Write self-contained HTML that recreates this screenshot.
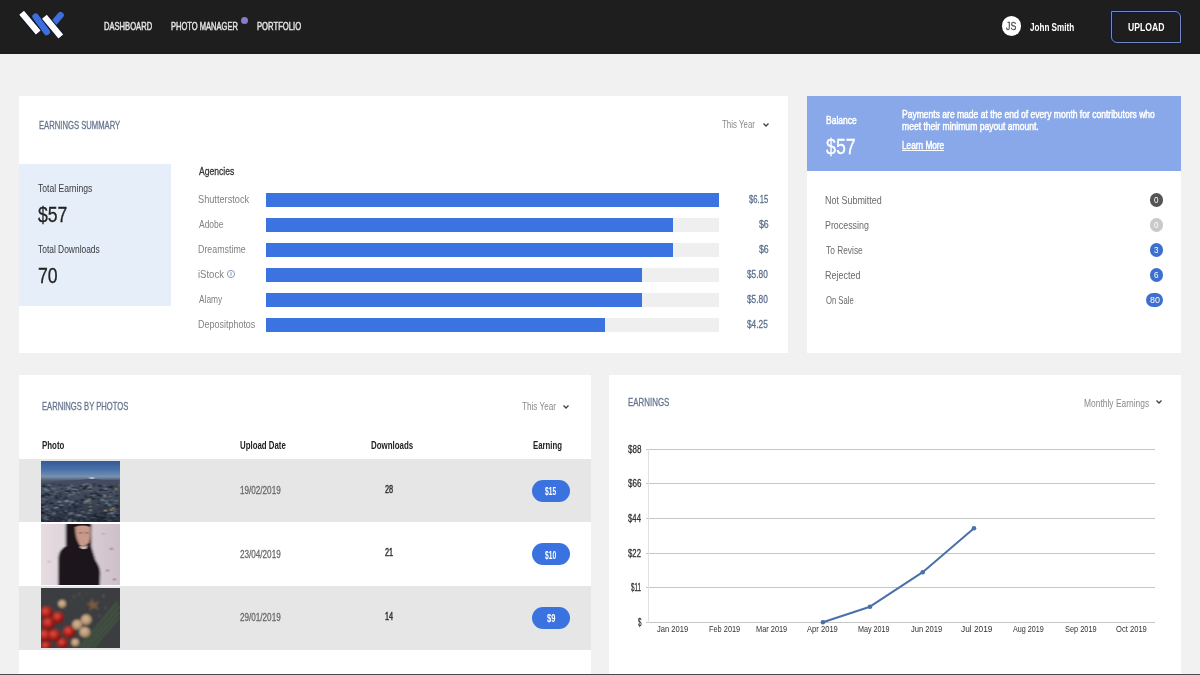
<!DOCTYPE html>
<html><head><meta charset="utf-8">
<style>
html,body{margin:0;padding:0}
body{width:1200px;height:675px;overflow:hidden;background:#f1f1f1;position:relative;font-family:"Liberation Sans",sans-serif}
.abs{position:absolute}
.tx{position:absolute;white-space:nowrap;line-height:1;transform-origin:0 0;font-family:"Liberation Sans",sans-serif}
.card{position:absolute;background:#fff}
.track{position:absolute;left:265.5px;width:453.5px;height:14.5px;background:#efefef}
.fill{position:absolute;left:0;top:0;height:100%;background:#3b73e0}
.badge{position:absolute;height:14px;border-radius:7px}
.pill{position:absolute;width:38px;height:22px;border-radius:11px;background:#3a72df}
.row{position:absolute;left:19px;width:571.5px;background:#e6e6e6}
.gl{position:absolute;left:645.7px;width:509.6px;height:1px;background:#c6c6c6}
</style></head>
<body>
<!-- header -->
<div class="abs" style="left:0;top:0;width:1200px;height:53.6px;background:#1e1e1e"></div>
<svg class="abs" style="left:0;top:0" width="80" height="53" viewBox="0 0 80 53">
  <g stroke-linecap="round" fill="none">
    <line x1="35.6" y1="16.6" x2="46.8" y2="32" stroke="#3b6fe0" stroke-width="6.4"/>
    <line x1="54.4" y1="22.4" x2="60.6" y2="15.2" stroke="#3b6fe0" stroke-width="6.4"/>
  </g>
  <g stroke-linecap="butt" fill="none">
    <line x1="21.6" y1="12.8" x2="38.2" y2="32.6" stroke="#0d1430" stroke-width="8"/>
    <line x1="21.6" y1="12.8" x2="38.2" y2="32.6" stroke="#ffffff" stroke-width="6.2"/>
    <line x1="44.4" y1="16.8" x2="60.8" y2="36.4" stroke="#0d1430" stroke-width="8"/>
    <line x1="44.4" y1="16.8" x2="60.8" y2="36.4" stroke="#ffffff" stroke-width="6.2"/>
  </g>
</svg>
<div class="abs" style="left:240.8px;top:17px;width:7px;height:7px;border-radius:50%;background:#8a7bc6"></div>
<div class="abs" style="left:1001.5px;top:16px;width:19.5px;height:20px;border-radius:50%;background:#ffffff"></div>
<div class="abs" style="left:1111px;top:11.2px;width:67.8px;height:29.5px;border:1.2px solid #7088c8;border-radius:0 6px 0 6px;box-shadow:0 0 0 1px #101a3e, inset 0 0 0 1px #101a3e"></div>

<!-- card 1 -->
<div class="card" style="left:19px;top:96px;width:769px;height:257px"></div>
<svg class="abs" style="left:761px;top:121px" width="10" height="8" viewBox="0 0 10 8"><path d="M2.5 2.6 L5 5 L7.5 2.6" stroke="#444" stroke-width="1.4" fill="none"/></svg>
<div class="abs" style="left:19px;top:164px;width:152px;height:141.5px;background:#e6eef9"></div>
<div class="track" style="top:192.5px"><div class="fill" style="width:453.5px"></div></div>
<div class="track" style="top:217.5px"><div class="fill" style="width:407.8px"></div></div>
<div class="track" style="top:242.5px"><div class="fill" style="width:407.8px"></div></div>
<div class="track" style="top:267.5px"><div class="fill" style="width:376.7px"></div></div>
<div class="track" style="top:292.5px"><div class="fill" style="width:376.7px"></div></div>
<div class="track" style="top:317.5px"><div class="fill" style="width:339.4px"></div></div>
<svg class="abs" style="left:225.5px;top:269px" width="10" height="10" viewBox="0 0 10 10"><circle cx="5" cy="5" r="3.6" stroke="#7a8fb0" stroke-width="0.9" fill="none"/><line x1="5" y1="3.2" x2="5" y2="6.8" stroke="#7a8fb0" stroke-width="0.9"/></svg>

<!-- card 2 -->
<div class="card" style="left:807px;top:96px;width:374px;height:257px"></div>
<div class="abs" style="left:807px;top:96px;width:374px;height:74.5px;background:#88a8ea"></div>
<div class="abs" style="left:901.7px;top:150px;width:42px;height:1px;background:#ffffff"></div>
<div class="badge" style="left:1150px;top:193px;width:13px;background:#555555"></div>
<div class="badge" style="left:1150px;top:218px;width:13px;background:#c9c9c9"></div>
<div class="badge" style="left:1150px;top:243px;width:13px;background:#3d6fcf"></div>
<div class="badge" style="left:1150px;top:268px;width:13px;background:#3d6fcf"></div>
<div class="badge" style="left:1145.5px;top:293px;width:17.5px;background:#3d6fcf"></div>

<!-- card 3 -->
<div class="card" style="left:19px;top:374.7px;width:571.5px;height:300px"></div>
<svg class="abs" style="left:561px;top:403px" width="10" height="8" viewBox="0 0 10 8"><path d="M2.5 2.6 L5 5 L7.5 2.6" stroke="#444" stroke-width="1.4" fill="none"/></svg>
<div class="row" style="top:459.2px;height:63.3px"></div>
<div class="row" style="top:586.3px;height:63.5px"></div>
<div class="pill" style="left:531.8px;top:479.6px"></div>
<div class="pill" style="left:532px;top:543.2px"></div>
<div class="pill" style="left:532px;top:606.5px"></div>
<!--IMAGES-->
<svg class="abs" style="left:41.4px;top:461px" width="78.5" height="60.6" viewBox="0 0 78 61" preserveAspectRatio="none">
<defs><linearGradient id="sky" x1="0" y1="0" x2="0" y2="1"><stop offset="0" stop-color="#2b5390"/><stop offset="0.18" stop-color="#4b72aa"/><stop offset="0.28" stop-color="#7891b0"/><stop offset="0.34" stop-color="#505a6c"/><stop offset="1" stop-color="#262d3c"/></linearGradient></defs>
<filter id="bl1" x="-10%" y="-10%" width="120%" height="120%"><feGaussianBlur stdDeviation="0.8"/></filter><rect width="78" height="61" fill="url(#sky)"/><g filter="url(#bl1)"><rect x="-3" y="-3" width="84" height="67" fill="url(#sky)"/>
<path d="M0 22 L20 20 L40 19 L50 17.5 L60 19 L78 19 L78 26 L0 26Z" fill="#424c60"/>
<ellipse cx="50.5" cy="17.2" rx="2.6" ry="0.8" fill="#d8dde4"/>
<circle cx="25.3" cy="28.7" r="1.1" fill="#1a202c"/><circle cx="41.8" cy="36.9" r="0.6" fill="#3f4a5c"/><circle cx="2.9" cy="39.5" r="0.6" fill="#1a202c"/><circle cx="33.1" cy="54.4" r="0.6" fill="#1a202c"/><circle cx="48.9" cy="59.0" r="1.0" fill="#1a202c"/><circle cx="76.1" cy="24.8" r="1.3" fill="#1a202c"/><circle cx="11.3" cy="27.5" r="0.8" fill="#6c7888"/><circle cx="14.1" cy="45.1" r="1.1" fill="#1a202c"/><circle cx="42.7" cy="25.4" r="0.6" fill="#1a202c"/><circle cx="53.1" cy="39.2" r="0.8" fill="#3f4a5c"/><circle cx="35.3" cy="34.4" r="1.2" fill="#3f4a5c"/><circle cx="19.0" cy="44.8" r="1.0" fill="#6c7888"/><circle cx="56.9" cy="33.9" r="1.4" fill="#1a202c"/><circle cx="32.6" cy="51.8" r="0.6" fill="#3f4a5c"/><circle cx="3.1" cy="48.4" r="1.2" fill="#3f4a5c"/><circle cx="68.3" cy="34.9" r="1.1" fill="#3f4a5c"/><circle cx="45.2" cy="40.3" r="1.3" fill="#948c74"/><circle cx="37.0" cy="48.2" r="0.6" fill="#3f4a5c"/><circle cx="50.5" cy="60.7" r="1.2" fill="#1a202c"/><circle cx="30.1" cy="48.4" r="0.5" fill="#3f4a5c"/><circle cx="13.1" cy="27.4" r="0.6" fill="#6c7888"/><circle cx="10.1" cy="32.4" r="0.9" fill="#6c7888"/><circle cx="6.3" cy="40.1" r="1.0" fill="#6c7888"/><circle cx="63.9" cy="55.8" r="0.8" fill="#1a202c"/><circle cx="28.0" cy="56.6" r="1.4" fill="#1a202c"/><circle cx="13.7" cy="31.8" r="0.7" fill="#3f4a5c"/><circle cx="46.0" cy="33.0" r="0.5" fill="#1a202c"/><circle cx="28.8" cy="44.5" r="1.4" fill="#3f4a5c"/><circle cx="40.2" cy="46.5" r="1.1" fill="#1a202c"/><circle cx="70.2" cy="52.6" r="1.3" fill="#6c7888"/><circle cx="30.6" cy="38.2" r="0.6" fill="#3f4a5c"/><circle cx="4.9" cy="25.6" r="0.7" fill="#1a202c"/><circle cx="26.5" cy="25.0" r="0.5" fill="#1a202c"/><circle cx="7.9" cy="36.8" r="0.5" fill="#6c7888"/><circle cx="47.9" cy="28.6" r="0.7" fill="#1a202c"/><circle cx="28.4" cy="27.7" r="1.3" fill="#75808f"/><circle cx="36.3" cy="41.4" r="0.6" fill="#1a202c"/><circle cx="26.7" cy="33.1" r="1.2" fill="#1a202c"/><circle cx="1.8" cy="59.1" r="1.0" fill="#1a202c"/><circle cx="42.4" cy="24.0" r="1.0" fill="#948c74"/><circle cx="67.3" cy="49.5" r="0.7" fill="#1a202c"/><circle cx="13.0" cy="52.3" r="1.0" fill="#6c7888"/><circle cx="25.7" cy="31.5" r="1.2" fill="#75808f"/><circle cx="66.5" cy="53.6" r="1.2" fill="#3f4a5c"/><circle cx="17.7" cy="42.7" r="0.8" fill="#1a202c"/><circle cx="2.2" cy="33.6" r="0.7" fill="#3f4a5c"/><circle cx="74.6" cy="40.0" r="1.3" fill="#948c74"/><circle cx="74.5" cy="36.9" r="0.7" fill="#1a202c"/><circle cx="15.3" cy="30.8" r="1.1" fill="#75808f"/><circle cx="65.6" cy="41.2" r="1.1" fill="#6c7888"/><circle cx="6.6" cy="48.1" r="1.3" fill="#6c7888"/><circle cx="58.5" cy="41.2" r="0.7" fill="#6c7888"/><circle cx="25.9" cy="53.4" r="1.4" fill="#1a202c"/><circle cx="31.3" cy="59.0" r="1.2" fill="#1a202c"/><circle cx="9.9" cy="28.7" r="1.3" fill="#6c7888"/><circle cx="11.4" cy="54.4" r="1.4" fill="#3f4a5c"/><circle cx="27.3" cy="43.8" r="0.6" fill="#1a202c"/><circle cx="75.7" cy="47.7" r="1.0" fill="#948c74"/><circle cx="33.8" cy="56.1" r="1.2" fill="#1a202c"/><circle cx="19.6" cy="34.1" r="0.7" fill="#3f4a5c"/><circle cx="20.2" cy="38.9" r="0.6" fill="#75808f"/><circle cx="27.6" cy="40.4" r="1.0" fill="#75808f"/><circle cx="32.8" cy="57.9" r="1.0" fill="#3f4a5c"/><circle cx="40.8" cy="23.7" r="0.9" fill="#1a202c"/><circle cx="0.3" cy="53.4" r="0.7" fill="#3f4a5c"/><circle cx="56.6" cy="44.1" r="0.8" fill="#3f4a5c"/><circle cx="43.3" cy="52.8" r="0.6" fill="#3f4a5c"/><circle cx="19.4" cy="33.5" r="1.2" fill="#3f4a5c"/><circle cx="43.8" cy="51.9" r="1.3" fill="#3f4a5c"/><circle cx="47.8" cy="42.2" r="1.0" fill="#3f4a5c"/><circle cx="35.3" cy="43.3" r="0.9" fill="#75808f"/><circle cx="54.5" cy="56.3" r="1.3" fill="#1a202c"/><circle cx="43.6" cy="58.8" r="1.3" fill="#1a202c"/><circle cx="9.5" cy="39.8" r="0.6" fill="#1a202c"/><circle cx="5.7" cy="48.4" r="1.2" fill="#6c7888"/><circle cx="12.0" cy="50.2" r="1.1" fill="#1a202c"/><circle cx="68.9" cy="59.8" r="0.7" fill="#948c74"/><circle cx="31.1" cy="41.5" r="1.4" fill="#6c7888"/><circle cx="12.6" cy="39.4" r="1.0" fill="#1a202c"/><circle cx="15.3" cy="35.1" r="1.1" fill="#1a202c"/><circle cx="43.2" cy="39.7" r="0.5" fill="#1a202c"/><circle cx="48.7" cy="42.5" r="0.6" fill="#948c74"/><circle cx="61.5" cy="59.9" r="0.6" fill="#1a202c"/><circle cx="3.1" cy="52.6" r="0.7" fill="#1a202c"/><circle cx="32.9" cy="57.6" r="1.2" fill="#1a202c"/><circle cx="11.7" cy="57.9" r="1.0" fill="#3f4a5c"/><circle cx="7.0" cy="25.2" r="1.1" fill="#3f4a5c"/><circle cx="5.6" cy="58.7" r="1.1" fill="#6c7888"/><circle cx="6.5" cy="55.5" r="0.6" fill="#6c7888"/><circle cx="35.4" cy="35.9" r="1.0" fill="#75808f"/><circle cx="20.9" cy="27.9" r="1.0" fill="#1a202c"/><circle cx="8.5" cy="29.1" r="0.5" fill="#1a202c"/><circle cx="24.3" cy="34.6" r="1.2" fill="#1a202c"/><circle cx="39.0" cy="29.8" r="0.8" fill="#1a202c"/><circle cx="19.5" cy="23.6" r="1.2" fill="#3f4a5c"/><circle cx="14.8" cy="41.0" r="1.3" fill="#1a202c"/><circle cx="63.9" cy="39.4" r="0.9" fill="#6c7888"/><circle cx="30.7" cy="42.3" r="1.1" fill="#75808f"/><circle cx="26.7" cy="54.6" r="1.1" fill="#3f4a5c"/><circle cx="31.6" cy="36.2" r="0.5" fill="#1a202c"/><circle cx="5.5" cy="51.2" r="0.7" fill="#1a202c"/><circle cx="6.6" cy="55.0" r="1.3" fill="#3f4a5c"/><circle cx="22.0" cy="32.2" r="0.8" fill="#3f4a5c"/><circle cx="12.3" cy="39.9" r="0.7" fill="#75808f"/><circle cx="75.9" cy="43.8" r="0.7" fill="#948c74"/><circle cx="24.1" cy="36.6" r="0.5" fill="#1a202c"/><circle cx="37.0" cy="42.1" r="0.7" fill="#3f4a5c"/><circle cx="0.4" cy="33.0" r="0.6" fill="#1a202c"/><circle cx="3.3" cy="23.9" r="0.8" fill="#1a202c"/><circle cx="45.7" cy="43.1" r="1.2" fill="#3f4a5c"/><circle cx="55.8" cy="56.4" r="0.9" fill="#1a202c"/><circle cx="76.8" cy="28.7" r="1.2" fill="#3f4a5c"/><circle cx="3.4" cy="54.7" r="1.3" fill="#3f4a5c"/><circle cx="57.2" cy="53.9" r="0.6" fill="#3f4a5c"/><circle cx="39.3" cy="54.7" r="1.2" fill="#6c7888"/><circle cx="45.6" cy="56.9" r="1.1" fill="#3f4a5c"/><circle cx="17.9" cy="24.2" r="0.6" fill="#1a202c"/><circle cx="8.2" cy="54.8" r="1.0" fill="#3f4a5c"/><circle cx="48.8" cy="48.9" r="0.9" fill="#1a202c"/><circle cx="62.2" cy="51.4" r="1.0" fill="#3f4a5c"/><circle cx="51.4" cy="25.5" r="1.2" fill="#1a202c"/><circle cx="5.8" cy="33.1" r="1.2" fill="#1a202c"/><circle cx="57.7" cy="60.1" r="0.9" fill="#1a202c"/><circle cx="37.4" cy="49.0" r="1.2" fill="#3f4a5c"/><circle cx="50.1" cy="25.9" r="0.6" fill="#1a202c"/><circle cx="58.0" cy="34.6" r="1.0" fill="#1a202c"/><circle cx="4.7" cy="33.2" r="1.1" fill="#3f4a5c"/><circle cx="52.7" cy="34.1" r="1.0" fill="#3f4a5c"/><circle cx="36.4" cy="27.5" r="1.3" fill="#1a202c"/><circle cx="76.3" cy="58.6" r="0.5" fill="#3f4a5c"/><circle cx="64.0" cy="59.8" r="0.9" fill="#1a202c"/><circle cx="16.4" cy="58.9" r="0.7" fill="#3f4a5c"/><circle cx="11.1" cy="42.9" r="1.4" fill="#1a202c"/><circle cx="64.0" cy="42.3" r="1.3" fill="#3f4a5c"/><circle cx="18.0" cy="57.1" r="0.9" fill="#1a202c"/><circle cx="0.3" cy="41.7" r="0.9" fill="#1a202c"/><circle cx="11.0" cy="36.1" r="0.8" fill="#6c7888"/><circle cx="0.1" cy="51.5" r="1.3" fill="#1a202c"/><circle cx="72.3" cy="50.1" r="1.3" fill="#1a202c"/><circle cx="29.0" cy="37.9" r="1.4" fill="#3f4a5c"/><circle cx="28.1" cy="39.3" r="0.7" fill="#1a202c"/><circle cx="7.9" cy="54.7" r="0.8" fill="#75808f"/><circle cx="19.4" cy="33.1" r="1.0" fill="#1a202c"/><circle cx="29.1" cy="59.3" r="1.3" fill="#6c7888"/><circle cx="49.2" cy="57.7" r="1.3" fill="#3f4a5c"/><circle cx="56.1" cy="24.9" r="1.2" fill="#3f4a5c"/><circle cx="58.7" cy="47.5" r="0.8" fill="#1a202c"/><circle cx="72.3" cy="27.8" r="0.9" fill="#1a202c"/><circle cx="23.2" cy="51.1" r="1.4" fill="#1a202c"/><circle cx="51.2" cy="34.4" r="1.0" fill="#1a202c"/><circle cx="13.1" cy="29.1" r="0.7" fill="#75808f"/><circle cx="38.8" cy="31.4" r="1.3" fill="#75808f"/><circle cx="35.1" cy="28.3" r="0.7" fill="#1a202c"/><circle cx="26.7" cy="26.5" r="0.7" fill="#1a202c"/><circle cx="44.4" cy="56.7" r="1.2" fill="#1a202c"/><circle cx="32.3" cy="42.9" r="0.8" fill="#1a202c"/><circle cx="4.8" cy="33.5" r="1.4" fill="#1a202c"/><circle cx="39.3" cy="46.9" r="1.3" fill="#1a202c"/><circle cx="21.1" cy="32.4" r="0.9" fill="#3f4a5c"/><circle cx="74.4" cy="55.2" r="1.3" fill="#1a202c"/><circle cx="2.5" cy="50.0" r="1.3" fill="#3f4a5c"/><circle cx="45.8" cy="23.0" r="0.9" fill="#948c74"/><circle cx="64.4" cy="55.5" r="1.4" fill="#1a202c"/><circle cx="8.5" cy="28.9" r="1.0" fill="#3f4a5c"/><circle cx="73.4" cy="50.4" r="1.1" fill="#6c7888"/><circle cx="35.7" cy="44.0" r="0.5" fill="#6c7888"/><circle cx="18.1" cy="58.0" r="1.1" fill="#1a202c"/><circle cx="10.0" cy="32.6" r="1.1" fill="#3f4a5c"/><circle cx="8.7" cy="25.7" r="1.0" fill="#3f4a5c"/><circle cx="30.3" cy="31.5" r="1.0" fill="#1a202c"/><circle cx="23.5" cy="40.5" r="1.4" fill="#3f4a5c"/><circle cx="68.9" cy="41.1" r="0.7" fill="#1a202c"/><circle cx="74.9" cy="49.8" r="0.8" fill="#1a202c"/><circle cx="38.9" cy="48.6" r="0.9" fill="#1a202c"/><circle cx="52.1" cy="58.2" r="0.7" fill="#1a202c"/><circle cx="26.4" cy="39.0" r="1.1" fill="#1a202c"/><circle cx="62.2" cy="51.1" r="1.0" fill="#1a202c"/><circle cx="75.6" cy="34.8" r="1.2" fill="#1a202c"/><circle cx="17.3" cy="51.9" r="0.8" fill="#75808f"/><circle cx="38.7" cy="30.1" r="0.7" fill="#1a202c"/><circle cx="51.9" cy="59.1" r="0.6" fill="#1a202c"/><circle cx="16.6" cy="60.0" r="0.6" fill="#1a202c"/><circle cx="4.7" cy="37.9" r="1.3" fill="#6c7888"/><circle cx="57.2" cy="60.9" r="1.3" fill="#1a202c"/><circle cx="14.5" cy="58.6" r="1.2" fill="#1a202c"/><circle cx="51.8" cy="37.4" r="0.8" fill="#1a202c"/><circle cx="13.2" cy="23.1" r="0.8" fill="#1a202c"/><circle cx="74.5" cy="27.7" r="1.4" fill="#1a202c"/><circle cx="27.8" cy="54.2" r="1.2" fill="#3f4a5c"/><circle cx="3.8" cy="41.0" r="0.8" fill="#75808f"/><circle cx="15.1" cy="36.8" r="1.3" fill="#1a202c"/><circle cx="32.0" cy="53.8" r="1.2" fill="#1a202c"/><circle cx="2.7" cy="25.4" r="1.3" fill="#1a202c"/><circle cx="58.3" cy="57.1" r="0.8" fill="#1a202c"/><circle cx="74.7" cy="46.4" r="0.7" fill="#3f4a5c"/><circle cx="24.7" cy="33.5" r="0.5" fill="#6c7888"/><circle cx="71.5" cy="47.1" r="1.3" fill="#1a202c"/><circle cx="18.2" cy="41.1" r="1.4" fill="#75808f"/><circle cx="30.1" cy="32.5" r="0.9" fill="#3f4a5c"/><circle cx="72.4" cy="30.0" r="1.2" fill="#3f4a5c"/><circle cx="64.2" cy="52.4" r="1.0" fill="#1a202c"/><circle cx="24.9" cy="36.8" r="1.2" fill="#1a202c"/><circle cx="15.4" cy="51.6" r="0.7" fill="#1a202c"/><circle cx="2.6" cy="44.0" r="0.8" fill="#75808f"/><circle cx="68.9" cy="60.5" r="0.7" fill="#1a202c"/><circle cx="7.5" cy="41.9" r="1.1" fill="#3f4a5c"/><circle cx="18.3" cy="38.8" r="1.1" fill="#3f4a5c"/><circle cx="58.3" cy="55.2" r="1.1" fill="#1a202c"/><circle cx="65.6" cy="34.2" r="1.0" fill="#1a202c"/><circle cx="57.6" cy="30.6" r="0.7" fill="#1a202c"/><circle cx="12.0" cy="56.6" r="1.0" fill="#1a202c"/><circle cx="30.9" cy="60.7" r="1.0" fill="#1a202c"/><circle cx="63.1" cy="47.8" r="1.4" fill="#1a202c"/><circle cx="37.0" cy="54.1" r="1.3" fill="#75808f"/><circle cx="3.1" cy="34.2" r="0.6" fill="#1a202c"/><circle cx="75.9" cy="45.2" r="1.3" fill="#1a202c"/><circle cx="67.6" cy="40.1" r="0.7" fill="#6c7888"/><circle cx="73.8" cy="27.0" r="1.0" fill="#3f4a5c"/><circle cx="17.0" cy="37.0" r="0.6" fill="#1a202c"/><circle cx="19.9" cy="45.8" r="1.1" fill="#1a202c"/><circle cx="0.9" cy="35.4" r="1.1" fill="#1a202c"/><circle cx="24.4" cy="30.7" r="1.2" fill="#3f4a5c"/><circle cx="4.9" cy="26.9" r="0.9" fill="#3f4a5c"/><circle cx="49.9" cy="26.5" r="0.6" fill="#3f4a5c"/><circle cx="32.0" cy="33.8" r="0.8" fill="#75808f"/><circle cx="24.4" cy="44.5" r="0.8" fill="#1a202c"/><circle cx="67.4" cy="60.9" r="0.8" fill="#1a202c"/><circle cx="56.8" cy="30.7" r="0.5" fill="#948c74"/><circle cx="33.1" cy="54.2" r="0.9" fill="#6c7888"/><circle cx="36.0" cy="29.2" r="0.5" fill="#3f4a5c"/><circle cx="50.0" cy="57.6" r="0.6" fill="#3f4a5c"/><circle cx="28.9" cy="42.2" r="0.6" fill="#1a202c"/><circle cx="40.7" cy="58.2" r="0.6" fill="#3f4a5c"/><circle cx="62.8" cy="59.7" r="0.7" fill="#1a202c"/><circle cx="73.6" cy="60.1" r="0.9" fill="#1a202c"/><circle cx="72.2" cy="37.7" r="1.3" fill="#3f4a5c"/><circle cx="64.3" cy="29.1" r="1.2" fill="#1a202c"/><circle cx="31.5" cy="55.2" r="1.2" fill="#1a202c"/><circle cx="17.0" cy="38.2" r="1.0" fill="#1a202c"/><circle cx="9.6" cy="32.4" r="1.2" fill="#6c7888"/><circle cx="3.2" cy="44.4" r="1.2" fill="#1a202c"/><circle cx="65.4" cy="27.5" r="1.0" fill="#3f4a5c"/><circle cx="48.9" cy="34.6" r="0.9" fill="#3f4a5c"/><circle cx="33.2" cy="48.0" r="0.9" fill="#3f4a5c"/><circle cx="1.8" cy="46.5" r="0.9" fill="#1a202c"/><circle cx="59.6" cy="52.6" r="0.9" fill="#1a202c"/><circle cx="36.9" cy="27.1" r="0.6" fill="#3f4a5c"/><circle cx="7.2" cy="39.8" r="1.0" fill="#1a202c"/><circle cx="49.6" cy="26.1" r="1.2" fill="#6c7888"/><circle cx="39.9" cy="25.1" r="1.0" fill="#1a202c"/><circle cx="74.2" cy="28.2" r="1.3" fill="#948c74"/><circle cx="57.1" cy="54.0" r="0.7" fill="#948c74"/><circle cx="38.4" cy="59.4" r="1.3" fill="#1a202c"/><circle cx="61.5" cy="58.4" r="0.6" fill="#1a202c"/><circle cx="59.0" cy="29.0" r="1.3" fill="#1a202c"/><circle cx="63.6" cy="28.5" r="1.0" fill="#948c74"/><circle cx="16.2" cy="33.0" r="1.0" fill="#1a202c"/><circle cx="2.9" cy="29.9" r="0.6" fill="#75808f"/><circle cx="53.0" cy="57.0" r="0.7" fill="#6c7888"/><circle cx="9.0" cy="43.2" r="1.1" fill="#1a202c"/><circle cx="68.1" cy="44.1" r="1.0" fill="#6c7888"/><circle cx="8.2" cy="60.7" r="1.1" fill="#1a202c"/><circle cx="62.2" cy="33.1" r="1.4" fill="#3f4a5c"/><circle cx="28.1" cy="52.1" r="0.9" fill="#1a202c"/><circle cx="58.0" cy="24.8" r="1.2" fill="#1a202c"/><circle cx="49.9" cy="60.4" r="1.0" fill="#3f4a5c"/><circle cx="24.4" cy="23.1" r="0.5" fill="#1a202c"/><circle cx="48.1" cy="39.4" r="1.0" fill="#6c7888"/><circle cx="10.3" cy="31.6" r="1.1" fill="#1a202c"/><circle cx="0.2" cy="36.5" r="0.6" fill="#1a202c"/><circle cx="17.5" cy="45.2" r="1.0" fill="#1a202c"/><circle cx="48.7" cy="41.0" r="0.6" fill="#948c74"/><circle cx="19.0" cy="28.7" r="0.6" fill="#3f4a5c"/><circle cx="68.0" cy="52.7" r="0.9" fill="#1a202c"/><circle cx="0.9" cy="47.5" r="1.0" fill="#1a202c"/><circle cx="50.4" cy="39.9" r="1.3" fill="#3f4a5c"/><circle cx="19.4" cy="57.3" r="0.5" fill="#3f4a5c"/><circle cx="31.7" cy="32.0" r="0.6" fill="#6c7888"/><circle cx="1.0" cy="43.9" r="1.3" fill="#1a202c"/><circle cx="15.6" cy="46.1" r="1.0" fill="#3f4a5c"/><circle cx="63.4" cy="29.6" r="0.8" fill="#1a202c"/><circle cx="3.8" cy="56.8" r="1.2" fill="#3f4a5c"/><circle cx="0.5" cy="55.1" r="1.2" fill="#3f4a5c"/><circle cx="57.9" cy="40.2" r="0.7" fill="#1a202c"/><circle cx="18.1" cy="24.5" r="0.8" fill="#6c7888"/><circle cx="54.2" cy="55.1" r="1.1" fill="#1a202c"/><circle cx="43.2" cy="39.6" r="1.2" fill="#3f4a5c"/><circle cx="20.7" cy="47.4" r="1.4" fill="#1a202c"/><circle cx="68.6" cy="23.6" r="0.7" fill="#1a202c"/><circle cx="58.0" cy="58.9" r="1.2" fill="#1a202c"/><circle cx="68.7" cy="35.5" r="0.7" fill="#948c74"/><circle cx="49.2" cy="49.3" r="1.1" fill="#948c74"/><circle cx="36.6" cy="54.9" r="1.1" fill="#6c7888"/><circle cx="34.1" cy="50.5" r="1.0" fill="#1a202c"/><circle cx="16.5" cy="46.7" r="0.6" fill="#75808f"/><circle cx="11.3" cy="24.0" r="0.6" fill="#75808f"/><circle cx="26.9" cy="28.4" r="0.5" fill="#1a202c"/><circle cx="54.0" cy="47.1" r="1.1" fill="#3f4a5c"/><circle cx="5.1" cy="45.4" r="0.8" fill="#6c7888"/><circle cx="63.9" cy="56.9" r="0.6" fill="#6c7888"/><circle cx="71.3" cy="58.9" r="0.6" fill="#1a202c"/><circle cx="8.7" cy="24.3" r="1.3" fill="#6c7888"/><circle cx="49.5" cy="54.4" r="1.1" fill="#1a202c"/><circle cx="7.8" cy="26.7" r="1.2" fill="#1a202c"/><circle cx="24.9" cy="39.1" r="0.5" fill="#1a202c"/><circle cx="22.0" cy="50.2" r="0.8" fill="#1a202c"/><circle cx="75.2" cy="42.1" r="1.3" fill="#3f4a5c"/><circle cx="2.4" cy="38.7" r="0.9" fill="#6c7888"/><circle cx="27.0" cy="49.8" r="1.0" fill="#1a202c"/><circle cx="67.3" cy="26.5" r="1.2" fill="#1a202c"/><circle cx="0.1" cy="30.7" r="1.2" fill="#75808f"/><circle cx="0.3" cy="41.7" r="0.9" fill="#6c7888"/><circle cx="14.4" cy="41.8" r="0.8" fill="#6c7888"/><circle cx="20.3" cy="58.9" r="0.8" fill="#1a202c"/><circle cx="54.6" cy="41.9" r="0.6" fill="#3f4a5c"/><circle cx="6.3" cy="52.9" r="1.1" fill="#6c7888"/><circle cx="49.0" cy="36.5" r="0.9" fill="#1a202c"/><circle cx="69.5" cy="26.3" r="1.3" fill="#1a202c"/><circle cx="16.1" cy="33.0" r="1.3" fill="#3f4a5c"/><circle cx="29.6" cy="56.6" r="0.7" fill="#3f4a5c"/><circle cx="41.5" cy="51.7" r="1.2" fill="#3f4a5c"/><circle cx="27.2" cy="35.4" r="0.6" fill="#6c7888"/><circle cx="51.6" cy="51.2" r="0.7" fill="#3f4a5c"/><circle cx="60.3" cy="45.0" r="0.6" fill="#3f4a5c"/><circle cx="69.0" cy="32.0" r="0.7" fill="#1a202c"/><circle cx="54.8" cy="55.1" r="0.6" fill="#1a202c"/><circle cx="19.3" cy="35.4" r="1.0" fill="#1a202c"/><circle cx="25.6" cy="30.2" r="1.4" fill="#3f4a5c"/><circle cx="7.9" cy="59.6" r="0.6" fill="#1a202c"/><circle cx="76.7" cy="53.2" r="1.2" fill="#3f4a5c"/><circle cx="15.3" cy="47.2" r="0.6" fill="#1a202c"/><circle cx="30.3" cy="24.3" r="0.9" fill="#6c7888"/><circle cx="54.1" cy="42.0" r="1.1" fill="#3f4a5c"/><circle cx="11.1" cy="45.9" r="0.9" fill="#6c7888"/><circle cx="70.8" cy="39.3" r="1.0" fill="#6c7888"/><circle cx="32.9" cy="31.7" r="1.1" fill="#6c7888"/><circle cx="60.4" cy="49.6" r="1.3" fill="#3f4a5c"/><circle cx="50.0" cy="40.2" r="0.8" fill="#3f4a5c"/><circle cx="7.6" cy="38.9" r="1.2" fill="#3f4a5c"/><circle cx="49.1" cy="32.5" r="0.9" fill="#3f4a5c"/><circle cx="48.5" cy="38.6" r="1.1" fill="#948c74"/><circle cx="14.3" cy="47.9" r="1.2" fill="#1a202c"/><circle cx="38.2" cy="60.0" r="0.5" fill="#3f4a5c"/><circle cx="12.5" cy="52.7" r="1.3" fill="#3f4a5c"/><circle cx="7.9" cy="44.8" r="1.0" fill="#3f4a5c"/><circle cx="40.0" cy="47.3" r="1.2" fill="#3f4a5c"/><circle cx="32.0" cy="59.0" r="0.7" fill="#3f4a5c"/><circle cx="30.6" cy="52.0" r="0.6" fill="#75808f"/><circle cx="27.7" cy="25.2" r="0.7" fill="#1a202c"/><circle cx="1.0" cy="38.9" r="0.9" fill="#3f4a5c"/><circle cx="27.5" cy="33.1" r="0.7" fill="#6c7888"/><circle cx="73.3" cy="43.0" r="0.7" fill="#6c7888"/><circle cx="30.6" cy="31.1" r="0.6" fill="#6c7888"/><circle cx="63.1" cy="47.1" r="0.9" fill="#3f4a5c"/><circle cx="17.6" cy="59.6" r="0.8" fill="#3f4a5c"/><circle cx="63.9" cy="54.0" r="0.9" fill="#1a202c"/><circle cx="42.8" cy="27.8" r="1.3" fill="#1a202c"/><circle cx="66.4" cy="33.2" r="0.8" fill="#1a202c"/><circle cx="33.2" cy="30.1" r="0.5" fill="#3f4a5c"/><circle cx="21.9" cy="32.3" r="0.8" fill="#3f4a5c"/><circle cx="33.4" cy="47.2" r="1.1" fill="#1a202c"/><circle cx="72.4" cy="55.5" r="0.6" fill="#6c7888"/><circle cx="70.7" cy="52.8" r="0.6" fill="#6c7888"/><circle cx="49.4" cy="23.6" r="0.5" fill="#948c74"/><circle cx="51.2" cy="32.5" r="0.6" fill="#1a202c"/><circle cx="18.2" cy="52.5" r="0.8" fill="#1a202c"/><circle cx="70.5" cy="53.1" r="0.7" fill="#6c7888"/><circle cx="47.5" cy="52.7" r="1.1" fill="#6c7888"/><circle cx="61.5" cy="54.9" r="0.7" fill="#3f4a5c"/><circle cx="41.4" cy="51.2" r="0.9" fill="#6c7888"/><circle cx="43.3" cy="33.1" r="0.7" fill="#1a202c"/><circle cx="38.5" cy="25.2" r="0.9" fill="#1a202c"/><circle cx="38.3" cy="41.9" r="1.0" fill="#6c7888"/><circle cx="0.5" cy="54.9" r="0.9" fill="#3f4a5c"/><circle cx="51.9" cy="54.9" r="0.8" fill="#1a202c"/><circle cx="74.9" cy="25.9" r="1.1" fill="#3f4a5c"/><circle cx="2.2" cy="46.2" r="1.1" fill="#75808f"/><circle cx="25.8" cy="60.3" r="1.0" fill="#3f4a5c"/><circle cx="70.0" cy="24.3" r="1.1" fill="#3f4a5c"/><circle cx="26.4" cy="55.7" r="0.8" fill="#3f4a5c"/><circle cx="41.0" cy="52.3" r="0.7" fill="#3f4a5c"/><circle cx="32.9" cy="44.1" r="1.2" fill="#1a202c"/><circle cx="64.6" cy="38.3" r="1.0" fill="#1a202c"/><circle cx="39.5" cy="60.0" r="1.1" fill="#6c7888"/><circle cx="25.8" cy="35.0" r="0.8" fill="#3f4a5c"/><circle cx="49.5" cy="52.8" r="0.5" fill="#3f4a5c"/><circle cx="69.1" cy="43.7" r="0.5" fill="#1a202c"/><circle cx="0.5" cy="30.2" r="1.3" fill="#3f4a5c"/><circle cx="51.3" cy="53.0" r="1.3" fill="#3f4a5c"/><circle cx="48.1" cy="46.8" r="1.1" fill="#3f4a5c"/><circle cx="53.1" cy="31.1" r="1.1" fill="#3f4a5c"/><circle cx="59.5" cy="26.9" r="0.7" fill="#1a202c"/><circle cx="60.4" cy="57.7" r="1.1" fill="#1a202c"/><circle cx="64.2" cy="52.9" r="1.0" fill="#1a202c"/><circle cx="23.6" cy="39.0" r="0.8" fill="#3f4a5c"/><circle cx="50.1" cy="58.5" r="0.5" fill="#3f4a5c"/><circle cx="3.1" cy="27.5" r="1.2" fill="#3f4a5c"/><circle cx="71.7" cy="40.0" r="0.5" fill="#1a202c"/><circle cx="46.2" cy="58.6" r="1.4" fill="#3f4a5c"/><circle cx="32.2" cy="26.9" r="1.1" fill="#1a202c"/><circle cx="11.8" cy="23.6" r="0.5" fill="#3f4a5c"/><circle cx="9.5" cy="59.7" r="0.6" fill="#6c7888"/><circle cx="10.1" cy="23.7" r="1.1" fill="#1a202c"/><circle cx="57.2" cy="30.1" r="0.5" fill="#6c7888"/><circle cx="55.7" cy="55.5" r="1.2" fill="#1a202c"/><circle cx="49.0" cy="50.0" r="0.9" fill="#948c74"/><circle cx="19.8" cy="59.6" r="1.1" fill="#1a202c"/><circle cx="1.1" cy="47.7" r="1.2" fill="#1a202c"/><circle cx="24.3" cy="50.7" r="0.6" fill="#6c7888"/><circle cx="37.9" cy="25.3" r="0.8" fill="#3f4a5c"/><circle cx="34.2" cy="48.7" r="0.6" fill="#6c7888"/><circle cx="28.3" cy="47.5" r="1.1" fill="#1a202c"/><circle cx="30.1" cy="52.9" r="1.4" fill="#6c7888"/><circle cx="44.2" cy="34.1" r="0.6" fill="#948c74"/><circle cx="54.9" cy="54.4" r="0.8" fill="#3f4a5c"/><circle cx="76.2" cy="54.6" r="1.0" fill="#1a202c"/><circle cx="33.4" cy="56.7" r="0.8" fill="#3f4a5c"/><circle cx="46.9" cy="57.1" r="1.2" fill="#1a202c"/><circle cx="0.1" cy="33.0" r="0.9" fill="#3f4a5c"/><circle cx="63.6" cy="56.7" r="0.5" fill="#6c7888"/><circle cx="63.3" cy="56.0" r="1.0" fill="#1a202c"/><circle cx="66.4" cy="53.7" r="1.1" fill="#948c74"/><circle cx="27.1" cy="26.2" r="1.0" fill="#6c7888"/><circle cx="15.6" cy="51.5" r="1.3" fill="#1a202c"/><circle cx="47.3" cy="48.8" r="0.9" fill="#1a202c"/><circle cx="19.9" cy="51.5" r="1.2" fill="#3f4a5c"/><circle cx="6.8" cy="53.6" r="1.2" fill="#1a202c"/><circle cx="45.2" cy="57.1" r="1.3" fill="#3f4a5c"/><circle cx="37.2" cy="45.4" r="0.7" fill="#1a202c"/><circle cx="14.1" cy="49.6" r="0.8" fill="#3f4a5c"/><circle cx="31.4" cy="42.7" r="0.6" fill="#1a202c"/><circle cx="77.8" cy="37.2" r="0.6" fill="#3f4a5c"/><circle cx="61.4" cy="28.9" r="1.0" fill="#1a202c"/><circle cx="40.5" cy="23.8" r="0.5" fill="#948c74"/><circle cx="67.6" cy="41.5" r="1.0" fill="#1a202c"/><circle cx="60.8" cy="39.2" r="1.4" fill="#6c7888"/><circle cx="63.9" cy="59.6" r="0.7" fill="#1a202c"/><circle cx="15.7" cy="29.9" r="0.6" fill="#1a202c"/><circle cx="43.5" cy="56.1" r="0.9" fill="#948c74"/><circle cx="71.0" cy="25.4" r="1.0" fill="#1a202c"/><circle cx="9.4" cy="59.5" r="0.7" fill="#3f4a5c"/><circle cx="50.0" cy="59.3" r="1.1" fill="#1a202c"/><circle cx="35.0" cy="29.1" r="1.4" fill="#75808f"/><circle cx="17.3" cy="24.5" r="0.7" fill="#1a202c"/><circle cx="70.4" cy="57.4" r="1.3" fill="#1a202c"/><circle cx="61.3" cy="50.0" r="1.1" fill="#948c74"/><circle cx="4.3" cy="28.5" r="1.2" fill="#75808f"/><circle cx="52.8" cy="34.4" r="1.0" fill="#6c7888"/><circle cx="8.2" cy="35.3" r="0.7" fill="#1a202c"/><circle cx="37.5" cy="29.4" r="0.7" fill="#1a202c"/><circle cx="52.9" cy="23.5" r="1.1" fill="#1a202c"/><circle cx="2.8" cy="58.3" r="0.7" fill="#75808f"/><circle cx="67.6" cy="56.8" r="0.6" fill="#3f4a5c"/><circle cx="7.6" cy="58.3" r="1.3" fill="#3f4a5c"/><circle cx="35.3" cy="35.9" r="1.2" fill="#3f4a5c"/><circle cx="49.0" cy="28.4" r="0.7" fill="#1a202c"/><circle cx="55.7" cy="44.0" r="0.6" fill="#6c7888"/><circle cx="20.8" cy="38.6" r="0.6" fill="#1a202c"/><circle cx="65.5" cy="35.7" r="0.7" fill="#3f4a5c"/><circle cx="24.8" cy="57.3" r="0.6" fill="#75808f"/><circle cx="4.4" cy="57.0" r="1.1" fill="#1a202c"/><circle cx="37.2" cy="33.9" r="0.7" fill="#1a202c"/><circle cx="28.4" cy="60.7" r="1.4" fill="#75808f"/><circle cx="7.6" cy="34.0" r="1.3" fill="#1a202c"/><circle cx="56.7" cy="34.2" r="1.4" fill="#1a202c"/><circle cx="62.9" cy="36.0" r="0.6" fill="#1a202c"/><circle cx="64.9" cy="43.0" r="0.7" fill="#3f4a5c"/><circle cx="71.1" cy="31.3" r="1.0" fill="#1a202c"/><circle cx="14.1" cy="52.3" r="1.1" fill="#1a202c"/><circle cx="6.2" cy="26.3" r="1.0" fill="#3f4a5c"/><circle cx="21.4" cy="30.8" r="1.1" fill="#3f4a5c"/><circle cx="63.3" cy="45.2" r="0.7" fill="#1a202c"/><circle cx="57.2" cy="38.5" r="1.1" fill="#1a202c"/><circle cx="63.2" cy="35.7" r="1.3" fill="#6c7888"/><circle cx="38.5" cy="23.6" r="1.3" fill="#3f4a5c"/><circle cx="68.0" cy="33.1" r="0.7" fill="#6c7888"/><circle cx="28.6" cy="29.2" r="0.8" fill="#3f4a5c"/><circle cx="0.4" cy="42.8" r="0.9" fill="#3f4a5c"/><circle cx="9.4" cy="50.2" r="1.2" fill="#6c7888"/><circle cx="25.0" cy="50.0" r="0.8" fill="#6c7888"/><circle cx="4.8" cy="56.2" r="1.4" fill="#3f4a5c"/><circle cx="40.0" cy="43.2" r="1.0" fill="#1a202c"/><circle cx="75.5" cy="31.5" r="0.7" fill="#1a202c"/><circle cx="19.5" cy="54.1" r="0.5" fill="#1a202c"/><circle cx="54.5" cy="30.4" r="0.5" fill="#3f4a5c"/><circle cx="45.0" cy="42.9" r="1.1" fill="#1a202c"/><circle cx="67.8" cy="50.2" r="0.5" fill="#1a202c"/><circle cx="38.5" cy="42.0" r="0.8" fill="#1a202c"/><circle cx="31.6" cy="28.2" r="1.0" fill="#6c7888"/><circle cx="11.5" cy="44.8" r="1.2" fill="#1a202c"/><circle cx="64.4" cy="58.6" r="0.8" fill="#3f4a5c"/><circle cx="65.5" cy="43.0" r="0.9" fill="#948c74"/><circle cx="60.6" cy="35.9" r="0.7" fill="#1a202c"/><circle cx="34.0" cy="60.3" r="1.2" fill="#75808f"/><circle cx="63.6" cy="55.2" r="0.5" fill="#3f4a5c"/><circle cx="74.7" cy="58.5" r="0.7" fill="#3f4a5c"/><circle cx="49.3" cy="36.8" r="1.0" fill="#1a202c"/><circle cx="33.8" cy="42.2" r="0.5" fill="#1a202c"/><circle cx="75.6" cy="52.5" r="1.3" fill="#3f4a5c"/><circle cx="63.1" cy="56.6" r="1.3" fill="#1a202c"/><circle cx="50.0" cy="33.1" r="1.1" fill="#1a202c"/><circle cx="42.3" cy="58.1" r="1.1" fill="#1a202c"/><circle cx="40.6" cy="39.5" r="1.4" fill="#1a202c"/><circle cx="23.8" cy="47.6" r="0.6" fill="#3f4a5c"/><circle cx="74.6" cy="42.5" r="0.7" fill="#3f4a5c"/><circle cx="41.6" cy="28.6" r="0.6" fill="#1a202c"/><circle cx="22.9" cy="38.4" r="0.8" fill="#1a202c"/><circle cx="6.9" cy="43.8" r="1.3" fill="#3f4a5c"/><circle cx="44.5" cy="47.7" r="0.7" fill="#3f4a5c"/><circle cx="35.9" cy="43.8" r="1.1" fill="#3f4a5c"/><circle cx="24.2" cy="32.2" r="0.7" fill="#3f4a5c"/><circle cx="29.9" cy="45.3" r="0.5" fill="#1a202c"/><circle cx="67.2" cy="32.1" r="1.0" fill="#3f4a5c"/><circle cx="22.2" cy="60.5" r="0.8" fill="#6c7888"/><circle cx="12.4" cy="25.5" r="1.3" fill="#3f4a5c"/><circle cx="4.8" cy="37.7" r="0.9" fill="#3f4a5c"/><circle cx="8.5" cy="31.6" r="1.4" fill="#3f4a5c"/><circle cx="12.1" cy="35.8" r="0.8" fill="#3f4a5c"/><circle cx="48.1" cy="55.3" r="1.2" fill="#3f4a5c"/><circle cx="57.6" cy="51.2" r="1.2" fill="#3f4a5c"/><circle cx="61.2" cy="49.9" r="1.3" fill="#1a202c"/><circle cx="67.9" cy="23.2" r="1.2" fill="#3f4a5c"/><circle cx="38.8" cy="59.6" r="1.0" fill="#1a202c"/><circle cx="61.1" cy="56.2" r="1.0" fill="#1a202c"/><circle cx="35.3" cy="40.4" r="1.2" fill="#1a202c"/><circle cx="30.5" cy="44.1" r="0.8" fill="#1a202c"/><circle cx="61.4" cy="55.3" r="0.9" fill="#3f4a5c"/><circle cx="14.4" cy="34.6" r="0.6" fill="#3f4a5c"/><circle cx="45.4" cy="26.3" r="1.3" fill="#1a202c"/><circle cx="65.8" cy="54.8" r="1.4" fill="#1a202c"/><circle cx="33.3" cy="57.6" r="0.5" fill="#1a202c"/><circle cx="44.1" cy="41.9" r="1.3" fill="#6c7888"/><circle cx="42.0" cy="60.9" r="1.0" fill="#3f4a5c"/><circle cx="53.4" cy="37.8" r="0.8" fill="#3f4a5c"/><circle cx="27.4" cy="59.0" r="1.1" fill="#3f4a5c"/><circle cx="7.7" cy="37.2" r="0.9" fill="#3f4a5c"/><circle cx="44.8" cy="56.4" r="1.4" fill="#3f4a5c"/><circle cx="34.3" cy="46.7" r="1.4" fill="#1a202c"/><circle cx="41.4" cy="54.0" r="0.7" fill="#1a202c"/><circle cx="76.3" cy="54.4" r="1.0" fill="#1a202c"/><circle cx="69.8" cy="49.2" r="1.2" fill="#948c74"/><circle cx="69.3" cy="39.0" r="0.6" fill="#1a202c"/><circle cx="39.9" cy="42.2" r="0.7" fill="#1a202c"/><circle cx="49.1" cy="45.9" r="0.8" fill="#948c74"/><circle cx="49.6" cy="24.6" r="0.9" fill="#6c7888"/><circle cx="23.9" cy="49.2" r="0.5" fill="#1a202c"/><circle cx="65.7" cy="45.3" r="1.1" fill="#1a202c"/><circle cx="38.8" cy="44.0" r="0.7" fill="#3f4a5c"/><circle cx="41.5" cy="60.9" r="1.0" fill="#1a202c"/><circle cx="9.5" cy="29.0" r="1.2" fill="#1a202c"/><circle cx="7.8" cy="29.5" r="1.0" fill="#6c7888"/><circle cx="47.8" cy="53.7" r="0.6" fill="#1a202c"/><circle cx="60.1" cy="35.3" r="1.1" fill="#1a202c"/><circle cx="13.2" cy="33.1" r="0.6" fill="#75808f"/><circle cx="45.4" cy="36.3" r="0.9" fill="#1a202c"/><circle cx="4.3" cy="56.8" r="1.0" fill="#75808f"/><circle cx="34.3" cy="46.6" r="0.7" fill="#1a202c"/><circle cx="72.6" cy="55.5" r="0.8" fill="#6c7888"/><circle cx="63.6" cy="34.5" r="1.0" fill="#948c74"/><circle cx="38.7" cy="59.1" r="0.7" fill="#1a202c"/><circle cx="56.0" cy="31.4" r="0.8" fill="#6c7888"/><circle cx="37.8" cy="53.1" r="0.7" fill="#1a202c"/><circle cx="28.0" cy="30.1" r="1.4" fill="#1a202c"/><circle cx="43.8" cy="27.4" r="1.0" fill="#1a202c"/><circle cx="31.4" cy="25.5" r="0.6" fill="#6c7888"/><circle cx="27.4" cy="32.3" r="0.7" fill="#1a202c"/><circle cx="18.5" cy="24.3" r="1.1" fill="#1a202c"/><circle cx="12.2" cy="49.8" r="0.6" fill="#1a202c"/><circle cx="65.1" cy="27.9" r="0.9" fill="#6c7888"/><circle cx="62.8" cy="29.1" r="0.8" fill="#3f4a5c"/><circle cx="29.4" cy="59.4" r="0.7" fill="#75808f"/><circle cx="39.4" cy="31.6" r="0.9" fill="#1a202c"/><circle cx="55.1" cy="32.9" r="1.3" fill="#3f4a5c"/><circle cx="28.7" cy="32.4" r="1.0" fill="#1a202c"/><circle cx="68.0" cy="27.7" r="1.0" fill="#3f4a5c"/><circle cx="21.1" cy="52.3" r="0.8" fill="#3f4a5c"/><circle cx="44.3" cy="34.8" r="0.9" fill="#1a202c"/><circle cx="13.8" cy="55.3" r="0.8" fill="#3f4a5c"/><circle cx="8.5" cy="44.4" r="0.8" fill="#3f4a5c"/><circle cx="23.2" cy="25.5" r="0.8" fill="#1a202c"/><circle cx="9.8" cy="50.2" r="0.8" fill="#1a202c"/><circle cx="70.9" cy="52.4" r="1.3" fill="#6c7888"/><circle cx="10.3" cy="33.5" r="0.5" fill="#3f4a5c"/><circle cx="51.8" cy="36.4" r="0.9" fill="#3f4a5c"/><circle cx="54.5" cy="32.4" r="1.3" fill="#1a202c"/><circle cx="49.0" cy="29.9" r="0.6" fill="#948c74"/><circle cx="57.3" cy="50.1" r="0.5" fill="#1a202c"/><circle cx="12.6" cy="30.5" r="0.8" fill="#1a202c"/><circle cx="3.1" cy="34.8" r="1.1" fill="#1a202c"/><circle cx="65.5" cy="44.7" r="1.1" fill="#1a202c"/><circle cx="33.9" cy="49.0" r="0.8" fill="#1a202c"/><circle cx="65.1" cy="52.5" r="0.8" fill="#1a202c"/><circle cx="66.6" cy="46.1" r="0.5" fill="#1a202c"/><circle cx="8.7" cy="53.1" r="0.7" fill="#75808f"/><circle cx="58.5" cy="26.3" r="1.1" fill="#1a202c"/><circle cx="58.3" cy="54.5" r="0.8" fill="#1a202c"/><circle cx="73.8" cy="39.1" r="1.3" fill="#3f4a5c"/><circle cx="57.6" cy="54.5" r="1.1" fill="#3f4a5c"/><circle cx="4.2" cy="49.5" r="0.9" fill="#3f4a5c"/><circle cx="72.4" cy="27.9" r="1.2" fill="#1a202c"/><circle cx="54.8" cy="53.6" r="0.7" fill="#3f4a5c"/><circle cx="75.6" cy="47.2" r="1.0" fill="#1a202c"/><circle cx="4.6" cy="36.6" r="0.9" fill="#1a202c"/><circle cx="24.2" cy="28.2" r="1.1" fill="#3f4a5c"/><circle cx="18.6" cy="32.2" r="1.0" fill="#3f4a5c"/><circle cx="73.0" cy="36.4" r="0.8" fill="#6c7888"/><circle cx="11.1" cy="44.4" r="0.8" fill="#6c7888"/><circle cx="42.8" cy="51.9" r="0.7" fill="#3f4a5c"/><circle cx="46.7" cy="40.5" r="1.2" fill="#6c7888"/><circle cx="8.9" cy="34.0" r="0.8" fill="#1a202c"/><circle cx="4.7" cy="33.7" r="0.7" fill="#3f4a5c"/><circle cx="34.9" cy="27.3" r="0.8" fill="#3f4a5c"/><circle cx="28.3" cy="29.4" r="0.6" fill="#1a202c"/><circle cx="77.4" cy="51.5" r="0.6" fill="#3f4a5c"/><circle cx="76.5" cy="44.4" r="0.6" fill="#3f4a5c"/><circle cx="33.9" cy="30.2" r="1.0" fill="#1a202c"/><circle cx="71.7" cy="47.5" r="1.1" fill="#948c74"/><circle cx="50.9" cy="32.6" r="0.7" fill="#1a202c"/><circle cx="2.2" cy="52.4" r="1.3" fill="#1a202c"/><circle cx="14.5" cy="47.2" r="1.3" fill="#75808f"/><circle cx="13.1" cy="52.8" r="1.2" fill="#6c7888"/><circle cx="25.5" cy="30.0" r="1.2" fill="#1a202c"/><circle cx="28.7" cy="43.9" r="0.8" fill="#6c7888"/><circle cx="18.7" cy="24.6" r="1.0" fill="#3f4a5c"/><circle cx="63.9" cy="49.8" r="1.3" fill="#948c74"/><circle cx="38.6" cy="42.0" r="0.6" fill="#1a202c"/><circle cx="45.3" cy="26.0" r="1.1" fill="#1a202c"/><circle cx="34.6" cy="59.9" r="0.6" fill="#1a202c"/><circle cx="34.3" cy="30.3" r="1.2" fill="#1a202c"/><circle cx="65.6" cy="55.5" r="1.2" fill="#3f4a5c"/><circle cx="22.1" cy="48.1" r="1.0" fill="#3f4a5c"/><circle cx="26.4" cy="39.7" r="1.1" fill="#6c7888"/><circle cx="70.5" cy="29.2" r="0.8" fill="#3f4a5c"/><circle cx="43.9" cy="36.2" r="0.7" fill="#1a202c"/><circle cx="25.2" cy="40.5" r="1.4" fill="#75808f"/><circle cx="67.5" cy="60.0" r="1.4" fill="#3f4a5c"/><circle cx="63.3" cy="25.3" r="1.1" fill="#3f4a5c"/><circle cx="23.2" cy="44.7" r="1.4" fill="#3f4a5c"/><circle cx="50.5" cy="34.4" r="0.8" fill="#6c7888"/><circle cx="2.2" cy="30.2" r="1.1" fill="#3f4a5c"/><circle cx="6.6" cy="48.1" r="0.8" fill="#3f4a5c"/><circle cx="32.5" cy="43.1" r="1.0" fill="#1a202c"/><circle cx="8.9" cy="29.9" r="1.3" fill="#3f4a5c"/><circle cx="8.8" cy="55.8" r="0.7" fill="#1a202c"/><circle cx="41.4" cy="32.6" r="0.9" fill="#3f4a5c"/><circle cx="17.7" cy="44.8" r="0.6" fill="#3f4a5c"/><circle cx="45.9" cy="26.0" r="0.9" fill="#1a202c"/><circle cx="34.3" cy="55.8" r="1.0" fill="#3f4a5c"/><circle cx="59.0" cy="27.4" r="1.4" fill="#3f4a5c"/><circle cx="8.0" cy="54.5" r="0.9" fill="#1a202c"/><circle cx="74.9" cy="44.4" r="1.2" fill="#1a202c"/><circle cx="60.5" cy="25.2" r="0.7" fill="#1a202c"/><circle cx="1.2" cy="45.6" r="0.7" fill="#1a202c"/><circle cx="55.2" cy="39.2" r="1.3" fill="#3f4a5c"/><circle cx="68.0" cy="44.4" r="1.3" fill="#6c7888"/><circle cx="13.1" cy="51.3" r="0.8" fill="#6c7888"/><circle cx="53.1" cy="54.4" r="0.6" fill="#1a202c"/><circle cx="57.5" cy="59.0" r="1.1" fill="#1a202c"/><circle cx="47.1" cy="26.8" r="1.0" fill="#6c7888"/><circle cx="8.8" cy="58.2" r="1.1" fill="#1a202c"/><circle cx="15.1" cy="40.0" r="1.3" fill="#3f4a5c"/><circle cx="8.9" cy="23.8" r="0.6" fill="#6c7888"/><circle cx="14.5" cy="44.1" r="0.8" fill="#3f4a5c"/><circle cx="29.7" cy="28.5" r="1.3" fill="#3f4a5c"/><circle cx="53.8" cy="53.7" r="1.4" fill="#1a202c"/><circle cx="26.7" cy="28.7" r="1.0" fill="#6c7888"/><circle cx="62.4" cy="24.3" r="0.7" fill="#6c7888"/><circle cx="53.0" cy="37.9" r="0.9" fill="#1a202c"/><circle cx="65.9" cy="37.9" r="1.3" fill="#3f4a5c"/><circle cx="5.9" cy="35.5" r="0.7" fill="#6c7888"/><circle cx="46.0" cy="24.7" r="0.7" fill="#1a202c"/><circle cx="36.5" cy="44.9" r="0.8" fill="#1a202c"/><circle cx="0.5" cy="45.0" r="0.8" fill="#1a202c"/><circle cx="35.8" cy="60.5" r="0.5" fill="#1a202c"/><circle cx="52.3" cy="33.4" r="0.7" fill="#3f4a5c"/><circle cx="20.4" cy="44.6" r="1.0" fill="#75808f"/><circle cx="77.4" cy="24.3" r="1.0" fill="#6c7888"/><circle cx="68.0" cy="52.4" r="1.1" fill="#3f4a5c"/><circle cx="28.3" cy="33.7" r="1.2" fill="#6c7888"/><circle cx="73.2" cy="48.9" r="0.8" fill="#6c7888"/><circle cx="57.7" cy="42.3" r="1.1" fill="#1a202c"/><circle cx="43.0" cy="38.4" r="0.6" fill="#1a202c"/><circle cx="25.2" cy="60.6" r="0.9" fill="#1a202c"/><circle cx="19.0" cy="31.9" r="0.8" fill="#1a202c"/><circle cx="0.6" cy="56.1" r="0.9" fill="#3f4a5c"/><circle cx="44.4" cy="34.5" r="0.7" fill="#1a202c"/><circle cx="23.5" cy="34.7" r="1.2" fill="#3f4a5c"/><circle cx="73.1" cy="35.9" r="1.3" fill="#3f4a5c"/><circle cx="6.2" cy="29.8" r="1.0" fill="#75808f"/><circle cx="27.8" cy="52.4" r="0.9" fill="#6c7888"/><circle cx="5.3" cy="41.4" r="1.3" fill="#1a202c"/><circle cx="20.1" cy="23.9" r="0.6" fill="#1a202c"/><circle cx="54.9" cy="31.3" r="0.9" fill="#1a202c"/><circle cx="47.0" cy="55.8" r="1.1" fill="#1a202c"/><circle cx="57.2" cy="59.6" r="1.0" fill="#1a202c"/><circle cx="63.1" cy="56.3" r="0.8" fill="#1a202c"/><circle cx="14.7" cy="43.4" r="1.3" fill="#3f4a5c"/><circle cx="72.0" cy="31.1" r="0.8" fill="#6c7888"/><circle cx="50.6" cy="38.4" r="1.1" fill="#1a202c"/><circle cx="4.5" cy="38.7" r="0.5" fill="#3f4a5c"/></g>
</svg>
<svg class="abs" style="left:41.4px;top:524px" width="78.5" height="60.5" viewBox="0 0 78 61" preserveAspectRatio="none">
<defs><linearGradient id="wall" x1="0" y1="0" x2="1" y2="0"><stop offset="0" stop-color="#e6dde2"/><stop offset="0.6" stop-color="#d9ccd4"/><stop offset="1" stop-color="#cdbfc8"/></linearGradient></defs>
<filter id="bl2" x="-10%" y="-10%" width="120%" height="120%"><feGaussianBlur stdDeviation="0.8"/></filter><rect width="78" height="61" fill="url(#wall)"/><g filter="url(#bl2)"><rect x="-3" y="-3" width="84" height="67" fill="url(#wall)"/>
<circle cx="70" cy="25" r="1.6" fill="#a7939f"/><circle cx="66" cy="47" r="1.4" fill="#9d8a96"/><circle cx="62" cy="10" r="1.2" fill="#b8a8b2"/><circle cx="73" cy="56" r="1.5" fill="#a08d99"/><circle cx="8" cy="38" r="1.5" fill="#cdc0c8"/>
<path d="M24.6 -3 L50 -3 L50 22.5 Q52 30 54.2 36.6 Q58.9 44 58.9 49 L58.5 64 L17 64 L17.2 34 Q17.8 26 24.6 22.5 Z" fill="#1d191c"/>
<path d="M34 3 Q41 0 49 3 Q50 13 47.5 19 Q43 24 38.5 21.5 Q34 14 34 3Z" fill="#c8998a"/><path d="M39 22 Q43 24 46 21 L45 25 Q41 26 39 24Z" fill="#d8c0b8"/>
<path d="M38 9 L41 9 M44 9 L47 9" stroke="#5a3a30" stroke-width="0.8"/></g>
</svg>
<svg class="abs" style="left:41.4px;top:587.8px" width="78.5" height="60.5" viewBox="0 0 78 61" preserveAspectRatio="none">
<defs><radialGradient id="tom" cx="0.4" cy="0.35" r="0.7"><stop offset="0" stop-color="#dc5446"/><stop offset="0.5" stop-color="#b0231b"/><stop offset="1" stop-color="#5a0f0c"/></radialGradient>
<radialGradient id="nut" cx="0.45" cy="0.4" r="0.7"><stop offset="0" stop-color="#d6bc9a"/><stop offset="0.7" stop-color="#ad8c6c"/><stop offset="1" stop-color="#5e4836"/></radialGradient></defs>
<filter id="bl3" x="-10%" y="-10%" width="120%" height="120%"><feGaussianBlur stdDeviation="0.9"/></filter><rect width="78" height="61" fill="#3a3c3f"/><g filter="url(#bl3)"><rect x="-3" y="-3" width="84" height="67" fill="#3a3c3f"/>
<g stroke="#4f7040" stroke-width="1.0" fill="none"><line x1="38" y1="61" x2="76" y2="14"/><line x1="42" y1="61" x2="78" y2="18"/><line x1="46" y1="61" x2="78" y2="24"/><line x1="51" y1="61" x2="78" y2="29"/></g>
<g fill="#7a5a40"><path d="M50 10 L53 15 L58 13 L55 18 L58 22 L52 20 L48 23 L49 18 L44 16 L49 15Z"/></g><g fill="#9a9590"><circle cx="33" cy="9" r="0.6"/><circle cx="38" cy="6" r="0.6"/><circle cx="45" cy="5" r="0.5"/><circle cx="62" cy="8" r="0.7"/><circle cx="64" cy="20" r="0.6"/><circle cx="58" cy="28" r="0.6"/><circle cx="30" cy="13" r="0.5"/><circle cx="41" cy="10" r="0.5"/></g>
<circle cx="21" cy="16" r="4.2" fill="url(#nut)"/>
<circle cx="5.5" cy="25" r="6.5" fill="url(#tom)"/>
<circle cx="17" cy="30" r="6" fill="url(#tom)"/>
<circle cx="7.5" cy="36" r="6.5" fill="url(#tom)"/>
<circle cx="4" cy="48" r="6.5" fill="url(#tom)"/>
<circle cx="13.5" cy="48" r="6.5" fill="url(#tom)"/>
<circle cx="28" cy="44.5" r="6.3" fill="url(#tom)"/>
<circle cx="5" cy="59" r="5.5" fill="url(#tom)"/>
<circle cx="21.5" cy="56" r="5.5" fill="url(#tom)"/>
<circle cx="36" cy="37" r="5.2" fill="url(#nut)"/>
<circle cx="45" cy="32" r="5.5" fill="url(#nut)"/>
<circle cx="43.5" cy="44.5" r="5.5" fill="url(#nut)"/>
<circle cx="34" cy="55" r="4" fill="url(#nut)"/></g>
</svg>
<!--/IMAGES-->

<!-- card 4 -->
<div class="card" style="left:609.4px;top:374.7px;width:571.6px;height:300px"></div>
<svg class="abs" style="left:1154px;top:398px" width="10" height="8" viewBox="0 0 10 8"><path d="M2.5 2.6 L5 5 L7.5 2.6" stroke="#444" stroke-width="1.4" fill="none"/></svg>
<div class="gl" style="top:448.5px"></div>
<div class="gl" style="top:483.2px"></div>
<div class="gl" style="top:517.9px"></div>
<div class="gl" style="top:552.6px"></div>
<div class="gl" style="top:587.3px"></div>
<div class="gl" style="top:622px"></div>
<div class="abs" style="left:648.2px;top:449px;width:1px;height:173.5px;background:#e2e2e2"></div>
<svg class="abs" style="left:0;top:0;pointer-events:none" width="1200" height="675">
  <polyline points="822.9,622.2 870,606.7 922.7,572.2 974,528.2" fill="none" stroke="#4a70a8" stroke-width="2" stroke-linejoin="round"/>
  <circle cx="822.9" cy="622.2" r="2.3" fill="#4a70a8"/>
  <circle cx="870" cy="606.7" r="2.3" fill="#4a70a8"/>
  <circle cx="922.7" cy="572.2" r="2.3" fill="#4a70a8"/>
  <circle cx="974" cy="528.2" r="2.3" fill="#4a70a8"/>
</svg>

<!-- bottom bar -->
<div class="abs" style="left:0;top:673.5px;width:1200px;height:2px;background:#4a4a4a"></div>
<div class=tx style="left:103.80px;top:21.50px;font-size:10.17px;color:#e2e2e2;font-weight:400;transform:scaleX(0.748);-webkit-text-stroke:0.45px currentColor;">DASHBOARD</div>
<div class=tx style="left:170.80px;top:21.50px;font-size:10.17px;color:#e2e2e2;font-weight:400;transform:scaleX(0.742);-webkit-text-stroke:0.45px currentColor;">PHOTO MANAGER</div>
<div class=tx style="left:257.00px;top:21.50px;font-size:10.17px;color:#e2e2e2;font-weight:400;transform:scaleX(0.755);-webkit-text-stroke:0.45px currentColor;">PORTFOLIO</div>
<div class=tx style="left:1005.80px;top:21.00px;font-size:11.48px;color:#4a4a4a;font-weight:400;transform:scaleX(0.769);-webkit-text-stroke:0.28px currentColor;">JS</div>
<div class=tx style="left:1030.00px;top:22.80px;font-size:10.32px;color:#ffffff;font-weight:700;transform:scaleX(0.786);">John Smith</div>
<div class=tx style="left:1128.00px;top:22.60px;font-size:10.32px;color:#ffffff;font-weight:700;transform:scaleX(0.835);">UPLOAD</div>
<div class=tx style="left:38.75px;top:119.50px;font-size:11.19px;color:#64738d;font-weight:400;transform:scaleX(0.685);-webkit-text-stroke:0.28px currentColor;">EARNINGS SUMMARY</div>
<div class=tx style="left:722.00px;top:120.30px;font-size:10.32px;color:#8a8a8a;font-weight:400;transform:scaleX(0.767);">This Year</div>
<div class=tx style="left:38.40px;top:183.50px;font-size:10.32px;color:#3a3a3a;font-weight:400;transform:scaleX(0.831);">Total Earnings</div>
<div class=tx style="left:38.40px;top:203.80px;font-size:21.22px;color:#222;font-weight:400;transform:scaleX(0.829);-webkit-text-stroke:0.28px currentColor;">$57</div>
<div class=tx style="left:38.40px;top:245.00px;font-size:10.32px;color:#3a3a3a;font-weight:400;transform:scaleX(0.816);">Total Downloads</div>
<div class=tx style="left:37.57px;top:264.70px;font-size:21.22px;color:#222;font-weight:400;transform:scaleX(0.832);-webkit-text-stroke:0.28px currentColor;">70</div>
<div class=tx style="left:199.00px;top:166.00px;font-size:11.05px;color:#333;font-weight:400;transform:scaleX(0.778);-webkit-text-stroke:0.28px currentColor;">Agencies</div>
<div class=tx style="left:198.17px;top:194.30px;font-size:11.05px;color:#828282;font-weight:400;transform:scaleX(0.833);">Shutterstock</div>
<div class=tx style="left:748.70px;top:194.30px;font-size:11.05px;color:#5a6e8c;font-weight:400;transform:scaleX(0.696);-webkit-text-stroke:0.28px currentColor;">$6.15</div>
<div class=tx style="left:199.00px;top:219.30px;font-size:11.05px;color:#828282;font-weight:400;transform:scaleX(0.766);">Adobe</div>
<div class=tx style="left:758.70px;top:219.30px;font-size:11.05px;color:#5a6e8c;font-weight:400;transform:scaleX(0.792);-webkit-text-stroke:0.28px currentColor;">$6</div>
<div class=tx style="left:198.20px;top:244.30px;font-size:11.05px;color:#828282;font-weight:400;transform:scaleX(0.802);">Dreamstime</div>
<div class=tx style="left:758.70px;top:244.30px;font-size:11.05px;color:#5a6e8c;font-weight:400;transform:scaleX(0.792);-webkit-text-stroke:0.28px currentColor;">$6</div>
<div class=tx style="left:198.14px;top:269.30px;font-size:11.05px;color:#828282;font-weight:400;transform:scaleX(0.862);">iStock</div>
<div class=tx style="left:747.20px;top:269.30px;font-size:11.05px;color:#5a6e8c;font-weight:400;transform:scaleX(0.750);-webkit-text-stroke:0.28px currentColor;">$5.80</div>
<div class=tx style="left:199.00px;top:294.30px;font-size:11.05px;color:#828282;font-weight:400;transform:scaleX(0.758);">Alamy</div>
<div class=tx style="left:747.20px;top:294.30px;font-size:11.05px;color:#5a6e8c;font-weight:400;transform:scaleX(0.750);-webkit-text-stroke:0.28px currentColor;">$5.80</div>
<div class=tx style="left:198.19px;top:319.30px;font-size:11.05px;color:#828282;font-weight:400;transform:scaleX(0.812);">Depositphotos</div>
<div class=tx style="left:747.20px;top:319.30px;font-size:11.05px;color:#5a6e8c;font-weight:400;transform:scaleX(0.750);-webkit-text-stroke:0.28px currentColor;">$4.25</div>
<div class=tx style="left:825.80px;top:116.20px;font-size:10.32px;color:#ffffff;font-weight:400;transform:scaleX(0.824);-webkit-text-stroke:0.45px currentColor;">Balance</div>
<div class=tx style="left:825.80px;top:135.20px;font-size:22.67px;color:#ffffff;font-weight:400;transform:scaleX(0.784);-webkit-text-stroke:0.28px currentColor;">$57</div>
<div class=tx style="left:901.70px;top:109.50px;font-size:10.03px;color:#ffffff;font-weight:400;transform:scaleX(0.852);-webkit-text-stroke:0.45px currentColor;">Payments are made at the end of every month for contributors who</div>
<div class=tx style="left:901.70px;top:122.00px;font-size:10.03px;color:#ffffff;font-weight:400;transform:scaleX(0.856);-webkit-text-stroke:0.45px currentColor;">meet their minimum payout amount.</div>
<div class=tx style="left:901.70px;top:141.00px;font-size:10.03px;color:#ffffff;font-weight:400;transform:scaleX(0.824);-webkit-text-stroke:0.45px currentColor;">Learn More</div>
<div class=tx style="left:824.83px;top:195.50px;font-size:10.32px;color:#6a6a6a;font-weight:400;transform:scaleX(0.869);">Not Submitted</div>
<div class=tx style="left:824.84px;top:220.50px;font-size:10.32px;color:#6a6a6a;font-weight:400;transform:scaleX(0.860);">Processing</div>
<div class=tx style="left:825.70px;top:245.50px;font-size:10.32px;color:#6a6a6a;font-weight:400;transform:scaleX(0.811);">To Revise</div>
<div class=tx style="left:824.83px;top:270.50px;font-size:10.32px;color:#6a6a6a;font-weight:400;transform:scaleX(0.872);">Rejected</div>
<div class=tx style="left:825.70px;top:295.50px;font-size:10.32px;color:#6a6a6a;font-weight:400;transform:scaleX(0.743);">On Sale</div>
<div class=tx style="left:1154.30px;top:195.20px;font-size:9.59px;color:#ffffff;font-weight:400;transform:scaleX(0.840);">0</div>
<div class=tx style="left:1154.30px;top:220.20px;font-size:9.59px;color:#ffffff;font-weight:400;transform:scaleX(0.840);">0</div>
<div class=tx style="left:1154.30px;top:245.20px;font-size:9.59px;color:#ffffff;font-weight:400;transform:scaleX(0.840);">3</div>
<div class=tx style="left:1154.30px;top:270.20px;font-size:9.59px;color:#ffffff;font-weight:400;transform:scaleX(0.840);">6</div>
<div class=tx style="left:1149.65px;top:295.20px;font-size:9.59px;color:#ffffff;font-weight:400;transform:scaleX(0.930);">80</div>
<div class=tx style="left:41.70px;top:401.00px;font-size:11.19px;color:#64738d;font-weight:400;transform:scaleX(0.683);-webkit-text-stroke:0.28px currentColor;">EARNINGS BY PHOTOS</div>
<div class=tx style="left:522.00px;top:401.80px;font-size:10.32px;color:#8a8a8a;font-weight:400;transform:scaleX(0.791);">This Year</div>
<div class=tx style="left:41.70px;top:439.50px;font-size:10.76px;color:#222;font-weight:700;transform:scaleX(0.733);">Photo</div>
<div class=tx style="left:239.70px;top:439.70px;font-size:10.76px;color:#222;font-weight:700;transform:scaleX(0.730);">Upload Date</div>
<div class=tx style="left:370.80px;top:439.70px;font-size:10.76px;color:#222;font-weight:700;transform:scaleX(0.737);">Downloads</div>
<div class=tx style="left:532.80px;top:439.80px;font-size:10.76px;color:#222;font-weight:700;transform:scaleX(0.725);">Earning</div>
<div class=tx style="left:239.70px;top:486.20px;font-size:10.32px;color:#6a6a6a;font-weight:400;transform:scaleX(0.788);-webkit-text-stroke:0.28px currentColor;">19/02/2019</div>
<div class=tx style="left:385.25px;top:484.70px;font-size:10.32px;color:#333;font-weight:400;transform:scaleX(0.708);-webkit-text-stroke:0.45px currentColor;">28</div>
<div class=tx style="left:545.30px;top:487.00px;font-size:10.32px;color:#ffffff;font-weight:700;transform:scaleX(0.647);">$15</div>
<div class=tx style="left:239.70px;top:549.70px;font-size:10.32px;color:#6a6a6a;font-weight:400;transform:scaleX(0.788);-webkit-text-stroke:0.28px currentColor;">23/04/2019</div>
<div class=tx style="left:385.25px;top:548.20px;font-size:10.32px;color:#333;font-weight:400;transform:scaleX(0.708);-webkit-text-stroke:0.45px currentColor;">21</div>
<div class=tx style="left:545.30px;top:550.50px;font-size:10.32px;color:#ffffff;font-weight:700;transform:scaleX(0.647);">$10</div>
<div class=tx style="left:239.70px;top:613.20px;font-size:10.32px;color:#6a6a6a;font-weight:400;transform:scaleX(0.788);-webkit-text-stroke:0.28px currentColor;">29/01/2019</div>
<div class=tx style="left:385.25px;top:611.70px;font-size:10.32px;color:#333;font-weight:400;transform:scaleX(0.708);-webkit-text-stroke:0.45px currentColor;">14</div>
<div class=tx style="left:546.80px;top:614.00px;font-size:10.32px;color:#ffffff;font-weight:700;transform:scaleX(0.727);">$9</div>
<div class=tx style="left:628.00px;top:397.30px;font-size:11.19px;color:#64738d;font-weight:400;transform:scaleX(0.707);-webkit-text-stroke:0.28px currentColor;">EARNINGS</div>
<div class=tx style="left:1083.58px;top:398.70px;font-size:10.32px;color:#8a8a8a;font-weight:400;transform:scaleX(0.818);">Monthly Earnings</div>
<div class=tx style="left:627.80px;top:443.60px;font-size:10.76px;color:#333;font-weight:400;transform:scaleX(0.750);-webkit-text-stroke:0.28px currentColor;">$88</div>
<div class=tx style="left:627.80px;top:478.30px;font-size:10.76px;color:#333;font-weight:400;transform:scaleX(0.750);-webkit-text-stroke:0.28px currentColor;">$66</div>
<div class=tx style="left:628.30px;top:513.00px;font-size:10.76px;color:#333;font-weight:400;transform:scaleX(0.722);-webkit-text-stroke:0.28px currentColor;">$44</div>
<div class=tx style="left:628.30px;top:547.70px;font-size:10.76px;color:#333;font-weight:400;transform:scaleX(0.722);-webkit-text-stroke:0.28px currentColor;">$22</div>
<div class=tx style="left:631.30px;top:582.40px;font-size:10.76px;color:#333;font-weight:400;transform:scaleX(0.588);-webkit-text-stroke:0.28px currentColor;">$11</div>
<div class=tx style="left:637.80px;top:617.10px;font-size:10.76px;color:#333;font-weight:400;transform:scaleX(0.583);-webkit-text-stroke:0.28px currentColor;">$</div>
<div class=tx style="left:656.50px;top:624.80px;font-size:8.58px;color:#333;font-weight:400;transform:scaleX(0.886);">Jan 2019</div>
<div class=tx style="left:708.50px;top:624.80px;font-size:8.58px;color:#333;font-weight:400;transform:scaleX(0.861);">Feb 2019</div>
<div class=tx style="left:756.00px;top:624.80px;font-size:8.58px;color:#333;font-weight:400;transform:scaleX(0.861);">Mar 2019</div>
<div class=tx style="left:807.40px;top:624.80px;font-size:8.58px;color:#333;font-weight:400;transform:scaleX(0.886);">Apr 2019</div>
<div class=tx style="left:857.80px;top:624.80px;font-size:8.58px;color:#333;font-weight:400;transform:scaleX(0.838);">May 2019</div>
<div class=tx style="left:910.50px;top:624.80px;font-size:8.58px;color:#333;font-weight:400;transform:scaleX(0.886);">Jun 2019</div>
<div class=tx style="left:960.70px;top:624.80px;font-size:8.58px;color:#333;font-weight:400;transform:scaleX(0.969);">Jul 2019</div>
<div class=tx style="left:1013.30px;top:624.80px;font-size:8.58px;color:#333;font-weight:400;transform:scaleX(0.838);">Aug 2019</div>
<div class=tx style="left:1064.94px;top:624.80px;font-size:8.58px;color:#333;font-weight:400;transform:scaleX(0.861);">Sep 2019</div>
<div class=tx style="left:1116.20px;top:624.80px;font-size:8.58px;color:#333;font-weight:400;transform:scaleX(0.886);">Oct 2019</div>
</body></html>
